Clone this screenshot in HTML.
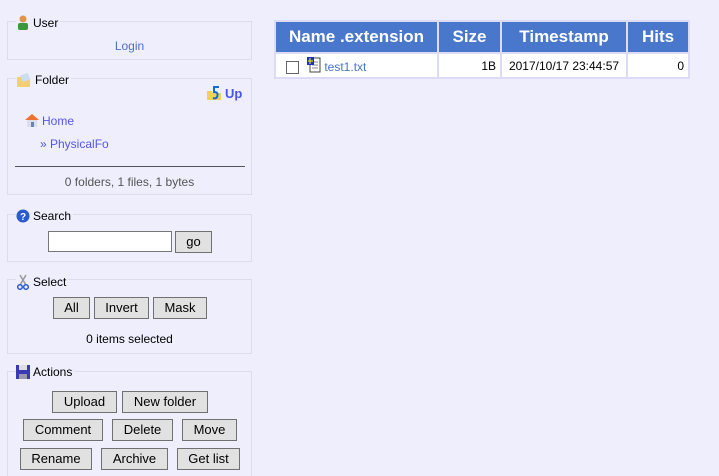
<!DOCTYPE html>
<html style="overflow:hidden;height:476px"><head><meta charset="utf-8"><style>
body{margin:0;width:719px;height:476px;background:#eeeefc;font-family:"Liberation Sans",sans-serif;font-size:12px;position:relative;overflow:hidden;color:#000}
.a{position:absolute}
.fs{position:absolute;left:7px;width:245px;border:1px solid #dcdcec;box-sizing:border-box}
.lg{position:absolute;left:16px;font-size:12px;background:#eeeefc;padding:0 2px 0 0;display:flex;align-items:center;gap:3px}
.btn{position:absolute;height:22px;box-sizing:border-box;border:1px solid #707070;background:#e1e1e1;font-size:13px;text-align:center;line-height:20px}
.c{text-align:center}
a{color:#4a72c8;text-decoration:none}
table{position:absolute;left:274px;top:20px;border-collapse:separate;border-spacing:2px;background:#dcdcf6}
th{background:#4877cc;color:#fff;font-size:17px;font-weight:bold;height:30px;padding:0}
td{background:#fff;height:23px;padding:0 4px;font-size:12px}
</style></head><body>
<div class="fs" style="top:21px;height:39px"></div>
<div class="lg" style="top:14px"><svg width="14" height="18"><circle cx="7" cy="5" r="3.5" fill="#e0944a"/><rect x="2" y="9" width="10" height="7" rx="2" fill="#3a9a3a"/></svg>User</div>
<div class="a c" style="left:7px;width:245px;top:39px"><a href="#">Login</a></div>

<div class="fs" style="top:78px;height:117px"></div>
<div class="lg" style="top:72px"><svg width="16" height="16"><path d="M1 5h5l1 2h7v8H1z" fill="#f0d070"/><rect x="5" y="2" width="8" height="7" fill="#cde" transform="rotate(-20 9 5)"/></svg>Folder</div>
<div class="a" style="left:207px;top:85px;font-weight:bold;font-size:13px;display:flex;align-items:center;gap:2px"><svg width="16" height="16"><path d="M0 6h5l1 2h8v7H0z" fill="#f0d060"/><path d="M6 2h6M7 2v5q5 0 3 5q-1 2-4 1" fill="none" stroke="#1a6ad0" stroke-width="2"/></svg><a href="#" style="color:#4b54ea">Up</a></div>
<div class="a" style="left:24px;top:112px;display:flex;align-items:flex-end;gap:2px"><svg width="16" height="16"><path d="M1 8L8 2l7 6" fill="#f07030"/><rect x="3" y="8" width="10" height="7" fill="#dde"/><rect x="7" y="10" width="3" height="5" fill="#68a"/></svg><a href="#" style="color:#5555ee">Home</a></div>
<div class="a" style="left:40px;top:137px"><a href="#" style="color:#5555ee">» PhysicalFo</a></div>
<div class="a" style="left:15px;top:166px;width:230px;border-top:1px solid #555"></div>
<div class="a c" style="left:7px;width:245px;top:175px;color:#555">0 folders, 1 files, 1 bytes</div>

<div class="fs" style="top:214px;height:48px"></div>
<div class="lg" style="top:209px"><svg width="14" height="14"><circle cx="7" cy="7" r="6.5" fill="#2a5ad0"/><text x="7" y="11" font-size="10" font-weight="bold" fill="#fff" text-anchor="middle" font-family="Liberation Sans">?</text></svg>Search</div>
<div class="a" style="left:48px;top:231px;width:124px;height:21px;box-sizing:border-box;border:1px solid #777;background:#fff"></div>
<div class="btn" style="left:175px;top:231px;width:37px">go</div>

<div class="fs" style="top:279px;height:75px"></div>
<div class="lg" style="top:274px"><svg width="14" height="16"><path d="M4 1l6 10M10 1L4 11" stroke="#999" stroke-width="1.5"/><circle cx="4" cy="13" r="2.3" fill="none" stroke="#2a5ad0" stroke-width="1.5"/><circle cx="10" cy="13" r="2.3" fill="none" stroke="#2a5ad0" stroke-width="1.5"/></svg>Select</div>
<div class="btn" style="left:53px;top:297px;width:37px">All</div>
<div class="btn" style="left:94px;top:297px;width:55px">Invert</div>
<div class="btn" style="left:153px;top:297px;width:54px">Mask</div>
<div class="a c" style="left:7px;width:245px;top:332px">0 items selected</div>

<div class="fs" style="top:371px;height:120px"></div>
<div class="lg" style="top:365px"><svg width="14" height="14"><rect x="0" y="0" width="14" height="14" fill="#3a3ab0"/><rect x="3" y="0" width="8" height="5" fill="#ddd"/><rect x="3" y="9" width="8" height="5" fill="#99a"/></svg>Actions</div>
<div class="btn" style="left:52px;top:391px;width:65px">Upload</div>
<div class="btn" style="left:122px;top:391px;width:86px">New folder</div>
<div class="btn" style="left:23px;top:419px;width:80px">Comment</div>
<div class="btn" style="left:112px;top:419px;width:61px">Delete</div>
<div class="btn" style="left:182px;top:419px;width:55px">Move</div>
<div class="btn" style="left:20px;top:448px;width:72px">Rename</div>
<div class="btn" style="left:101px;top:448px;width:67px">Archive</div>
<div class="btn" style="left:177px;top:448px;width:63px">Get list</div>

<table>
<tr><th style="width:161px">Name .extension</th><th style="width:61px">Size</th><th style="width:124px">Timestamp</th><th style="width:60px">Hits</th></tr>
<tr><td style="padding-left:10px"><span style="display:inline-block;width:11px;height:11px;border:1px solid #666;background:#fff;vertical-align:middle;margin-right:8px"></span><svg width="14" height="16" style="vertical-align:-2px"><rect x="3" y="1" width="10" height="14" fill="#fff" stroke="#444"/><path d="M5 5h6M5 8h6M5 11h6" stroke="#888"/><rect x="0" y="0" width="7" height="8" fill="#2030c0"/><path d="M1 4h5M3 1v6" stroke="#ff0"/></svg> <a href="#">test1.txt</a></td><td style="text-align:right">1B</td><td style="text-align:center">2017/10/17 23:44:57</td><td style="text-align:right">0</td></tr>
</table>
</body></html>
